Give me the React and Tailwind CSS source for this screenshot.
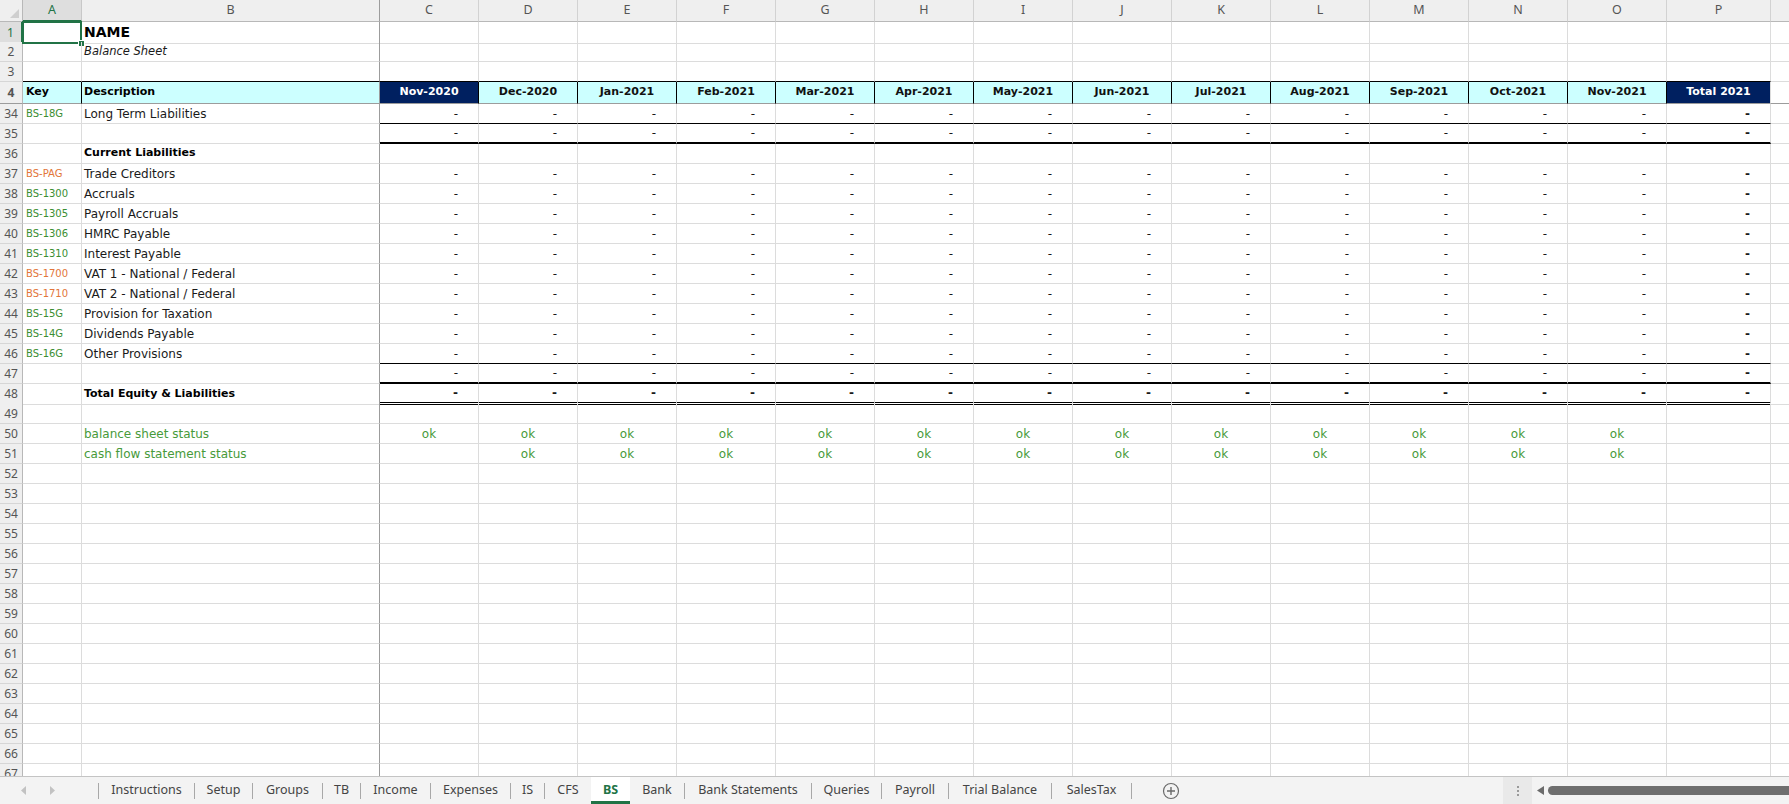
import React from 'react';

const GRID = 'grid grid-cols-[23px_59px_298px_repeat(13,99px)_104px_1fr]';
const LETTERS = ['C', 'D', 'E', 'F', 'G', 'H', 'I', 'J', 'K', 'L', 'M', 'N', 'O', 'P'];
const MONTHS = ['Nov-2020', 'Dec-2020', 'Jan-2021', 'Feb-2021', 'Mar-2021', 'Apr-2021', 'May-2021', 'Jun-2021', 'Jul-2021', 'Aug-2021', 'Sep-2021', 'Oct-2021', 'Nov-2021', 'Total 2021'];

const rows = [
    { n: 1, name: true },
    { n: 2, desc: 'Balance Sheet', italic: true },
    { n: 3, topOfHeader: true },
    { n: 4, header: true },
    { n: 34, key: 'BS-18G', kc: 'g', desc: 'Long Term Liabilities', vals: true, line: 'thin' },
    { n: 35, vals: true, line: 'thick' },
    { n: 36, desc: 'Current Liabilities', bold: true },
    { n: 37, key: 'BS-PAG', kc: 'o', desc: 'Trade Creditors', vals: true },
    { n: 38, key: 'BS-1300', kc: 'g', desc: 'Accruals', vals: true },
    { n: 39, key: 'BS-1305', kc: 'g', desc: 'Payroll Accruals', vals: true },
    { n: 40, key: 'BS-1306', kc: 'g', desc: 'HMRC Payable', vals: true },
    { n: 41, key: 'BS-1310', kc: 'g', desc: 'Interest Payable', vals: true },
    { n: 42, key: 'BS-1700', kc: 'o', desc: 'VAT 1 - National / Federal', vals: true },
    { n: 43, key: 'BS-1710', kc: 'o', desc: 'VAT 2 - National / Federal', vals: true },
    { n: 44, key: 'BS-15G', kc: 'g', desc: 'Provision for Taxation', vals: true },
    { n: 45, key: 'BS-14G', kc: 'g', desc: 'Dividends Payable', vals: true },
    { n: 46, key: 'BS-16G', kc: 'g', desc: 'Other Provisions', vals: true, line: 'thin' },
    { n: 47, vals: true, line: 'thick' },
    { n: 48, desc: 'Total Equity & Liabilities', bold: true, vals: true, boldVals: true, line: 'double' },
    { n: 49 },
    { n: 50, desc: 'balance sheet status', status: true, ok: 0 },
    { n: 51, desc: 'cash flow statement status', status: true, ok: 1 },
];
for (let i = 52; i <= 67; i++) rows.push({ n: i });

const tabs = [
    { name: 'Instructions', w: 'w-[95px]' },
    { name: 'Setup', w: 'w-[57px]' },
    { name: 'Groups', w: 'w-[69px]' },
    { name: 'TB', w: 'w-[37px]' },
    { name: 'Income', w: 'w-[69px]' },
    { name: 'Expenses', w: 'w-[79px]' },
    { name: 'IS', w: 'w-[33px]' },
    { name: 'CFS', w: 'w-[46px]', noSep: true },
    { name: 'BS', w: 'w-[39px]', active: true, noSep: true },
    { name: 'Bank', w: 'w-[54px]' },
    { name: 'Bank Statements', w: 'w-[126px]' },
    { name: 'Queries', w: 'w-[69px]' },
    { name: 'Payroll', w: 'w-[66px]' },
    { name: 'Trial Balance', w: 'w-[102px]' },
    { name: 'SalesTax', w: 'w-[79px]' },
];

const cellFont = "font-['DejaVu_Sans',sans-serif]";
const uiFont = "font-['Noto_Sans',sans-serif]";

function bottom(kind) {
    if (kind === 'thin') return 'border-b border-b-black';
    if (kind === 'thick') return 'border-b-2 border-b-black';
    if (kind === 'double') return 'border-b-[3px] border-double border-b-black';
    if (kind === 'black') return 'border-b border-b-black';
    if (kind === 'freeze') return 'border-b border-b-[#9c9c9c]';
    return 'border-b border-b-[#dcdcdc]';
}

const RowHead = ({ n, selected }) => (
    <div className={`flex items-center justify-center border-r border-b text-[12px] ${uiFont} ${selected ? 'bg-[#dedede] text-[#217346] border-r-2 border-r-[#217346]' : 'bg-[#efefef] text-[#555] border-r-[#b8b8b8]'} ${n === 4 ? 'border-b-[#9c9c9c]' : 'border-b-[#d6d6d6]'}`}>
        {n}
    </div>
);

const ColumnHeader = () => (
    <div className={`${GRID} h-[22px] text-[12.5px] ${uiFont}`}>
        <div className="relative bg-[#efefef] border-r border-r-[#b8b8b8] border-b border-b-[#b8b8b8]">
            <svg className="absolute right-[3px] bottom-[3px]" width="9" height="9" viewBox="0 0 9 9">
                <polygon points="9,0 9,9 0,9" fill="#cfcfcf" />
            </svg>
        </div>
        <div className="flex items-center justify-center bg-[#dedede] text-[#217346] border-r border-r-[#c8c8c8] border-b-2 border-b-[#217346]">A</div>
        <div className="flex items-center justify-center bg-[#efefef] text-[#555] border-r border-r-[#9c9c9c] border-b border-b-[#b8b8b8]">B</div>
        {LETTERS.map((l) => (
            <div key={l} className="flex items-center justify-center bg-[#efefef] text-[#555] border-r border-r-[#d2d2d2] border-b border-b-[#b8b8b8]">{l}</div>
        ))}
        <div className="bg-[#efefef] border-b border-b-[#b8b8b8]" />
    </div>
);

const HeaderRow = () => (
    <div className={`${GRID} h-[22px] ${cellFont} font-bold text-[11px]`}>
        <RowHead n={4} />
        <div className="flex items-center pl-[3px] bg-[#ccffff] border-r border-r-black border-b border-b-[#9c9c9c]">Key</div>
        <div className="flex items-center pl-[2px] bg-[#ccffff] border-r border-r-[#9c9c9c] border-b border-b-[#9c9c9c]">Description</div>
        {MONTHS.map((m, i) => (
            <div key={m} className={`flex items-center justify-center border-b border-b-[#9c9c9c] ${i === 0 || i === 13 ? 'bg-[#002060] text-white' : 'bg-[#ccffff] text-[#111]'} ${i === 13 ? 'border-r border-r-[#dcdcdc]' : 'border-r border-r-black'}`}>
                {m}
            </div>
        ))}
        <div className="border-b border-b-[#9c9c9c]" />
    </div>
);

const SheetRow = ({ r }) => {
    const lineAB = r.topOfHeader ? 'black' : undefined;
    const keyColor = r.kc === 'o' ? 'text-[#e2763a]' : 'text-[#3b8e32]';
    return (
        <div className={`${GRID} h-[20px] ${cellFont} text-[12px] text-[#1a1a1a]`}>
            <RowHead n={r.n} selected={r.n === 1} />
            <div className={`relative flex items-center pl-[3px] border-r border-r-[#dcdcdc] ${bottom(lineAB)}`}>
                {r.key && <span className={`text-[10px] ${keyColor}`}>{r.key}</span>}
                {r.n === 1 && (
                    <div className="absolute -left-px -top-px right-[-1px] bottom-[-1px] border-2 border-[#217346]">
                        <div className="absolute right-[-5px] bottom-[-5px] w-[7px] h-[7px] bg-[#217346] border border-white" />
                    </div>
                )}
            </div>
            <div className={`flex items-center pl-[2px] whitespace-nowrap border-r border-r-[#9c9c9c] ${bottom(lineAB)}`}>
                {r.name && <span className="font-bold text-[14px] text-black">NAME</span>}
                {r.desc && (
                    <span className={`${r.italic ? 'italic text-[11.5px]' : ''} ${r.bold ? 'font-bold text-[11px] text-black' : ''} ${r.status ? 'text-[#479a3a]' : ''}`}>
                        {r.desc}
                    </span>
                )}
            </div>
            {LETTERS.map((l, i) => {
                const isP = i === 13;
                const line = r.topOfHeader ? 'black' : r.line;
                const showOk = r.status && !isP && i >= r.ok;
                return (
                    <div key={l} className={`flex items-center border-r border-r-[#dcdcdc] ${bottom(line)} ${showOk ? 'justify-center' : 'justify-end pr-[20px]'}`}>
                        {r.vals && <span className={isP || r.boldVals ? 'font-bold' : ''}>-</span>}
                        {showOk && <span className="text-[#479a3a]">ok</span>}
                    </div>
                );
            })}
            <div className="border-b border-b-[#dcdcdc]" />
        </div>
    );
};

const Separator = () => <div className="w-px h-[16px] bg-[#a8a8a8]" />;

const TabBar = () => (
    <div className={`h-[28px] shrink-0 flex items-center bg-[#f3f3f3] border-t border-t-[#c4c4c4] ${uiFont} text-[12.5px] text-[#444]`}>
        <div className="w-[98px] h-full flex items-center pl-[21px] gap-[22px]">
            <svg width="6" height="9" viewBox="0 0 6 9"><polygon points="5,0 5,9 0,4.5" fill="#c2c2c2" /></svg>
            <svg width="6" height="9" viewBox="0 0 6 9"><polygon points="1,0 1,9 6,4.5" fill="#c2c2c2" /></svg>
        </div>
        <Separator />
        {tabs.map((t) => (
            <React.Fragment key={t.name}>
                <div className={`${t.w} h-full flex items-center justify-center ${t.active ? 'bg-white text-[#217346] font-bold border-b-[3px] border-b-[#217346] pt-[3px]' : ''}`}>
                    {t.name}
                </div>
                {!t.noSep && <Separator />}
            </React.Fragment>
        ))}
        <div className="ml-[30px]">
            <svg width="18" height="18" viewBox="0 0 18 18">
                <circle cx="9" cy="9" r="7.5" fill="none" stroke="#6a6a6a" strokeWidth="1.2" />
                <path d="M9 5v8M5 9h8" stroke="#6a6a6a" strokeWidth="1.4" />
            </svg>
        </div>
        <div className="flex-1" />
        <div className="w-[29px] h-full flex flex-col items-center justify-center gap-[2px] bg-[#e9e9e9]">
            <div className="w-[2px] h-[2px] bg-[#9a9a9a]" />
            <div className="w-[2px] h-[2px] bg-[#9a9a9a]" />
            <div className="w-[2px] h-[2px] bg-[#9a9a9a]" />
        </div>
        <div className="ml-[5px] mr-[4px]">
            <svg width="7" height="9" viewBox="0 0 7 9"><polygon points="7,0 7,9 0,4.5" fill="#6b6b6b" /></svg>
        </div>
        <div className="w-[241px] h-[9px] rounded-l-full bg-[#6e6e6e]" />
    </div>
);

export default function App() {
    return (
        <div className="w-[1789px] h-[804px] overflow-hidden bg-white flex flex-col">
            <div className="flex-1 overflow-hidden">
                <ColumnHeader />
                {rows.map((r) => (r.header ? <HeaderRow key={r.n} /> : <SheetRow key={r.n} r={r} />))}
            </div>
            <TabBar />
        </div>
    );
}
